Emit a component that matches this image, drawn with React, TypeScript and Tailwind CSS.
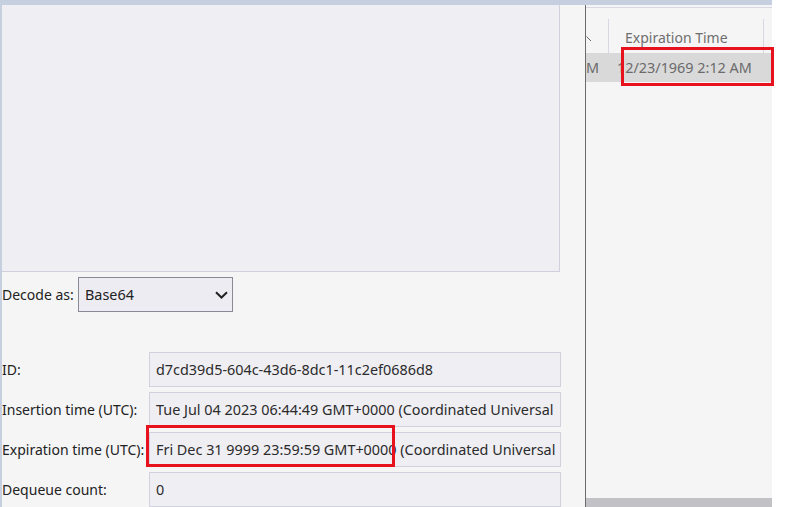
export default function App() {
  const rows: { label: string; value: string; red?: boolean }[] = [
    { label: "ID:", value: "d7cd39d5-604c-43d6-8dc1-11c2ef0686d8" },
    { label: "Insertion time (UTC):", value: "Tue Jul 04 2023 06:44:49 GMT+0000 (Coordinated Universal" },
    { label: "Expiration time (UTC):", value: "Fri Dec 31 9999 23:59:59 GMT+0000 (Coordinated Universal", red: true },
    { label: "Dequeue count:", value: "0" },
  ];
  return (
    <div className="h-[507px] w-[785px] overflow-hidden bg-white font-['Noto_Sans',sans-serif] text-[14px] text-[#222]">
      <div className="flex h-full w-[772px] flex-col bg-[#c5cfe0]">
        <div className="h-[5px] shrink-0" />
        <div className="flex min-h-0 flex-1">
          {/* left panel */}
          <div className="ml-[2px] flex w-[583px] flex-col bg-[#f5f5f5]">
            <div className="h-[267px] w-[558px] shrink-0 border-b border-r border-[#d0d0dc] bg-[#efeef3]" />
            <div className="mt-[5px] flex h-[35px] shrink-0 items-center">
              <span className="w-[76px] shrink-0 whitespace-nowrap">Decode as:</span>
              <div className="flex h-[35px] w-[155px] shrink-0 items-center justify-between border border-[#8a8a96] bg-[#edecf2] pl-[6px] pr-[4px] text-[14.4px]">
                <span>Base64</span>
                <svg width="13" height="8" viewBox="0 0 13 8" fill="none">
                  <path d="M1 1.2 L6.5 6.5 L12 1.2" stroke="#222" strokeWidth="2" />
                </svg>
              </div>
            </div>
            <div className="mt-[40px] flex flex-col gap-[5px]">
              {rows.map((r) => (
                <div key={r.label} className="flex h-[35px] shrink-0 items-center">
                  <span className="w-[147px] shrink-0 whitespace-nowrap">{r.label}</span>
                  <div className="relative h-[35px] w-[412px] shrink-0 border border-[#d2d2de] bg-[#efeef3]">
                    <div className="h-full whitespace-nowrap pl-[6px] pt-[6px] text-[14.4px] text-[#2b2b2b]">{r.value}</div>
                    {r.red && (
                      <div className="absolute left-[-4px] top-[-8px] h-[42px] w-[249px] border-[3px] border-[#e8121e]" />
                    )}
                  </div>
                </div>
              ))}
            </div>
          </div>
          <div className="w-px shrink-0 bg-[#6b6b6b]" />
          {/* right panel */}
          <div className="relative flex w-[186px] shrink-0 flex-col bg-[#f5f5f5]">
            <div className="h-[2px] shrink-0" />
            <div className="h-px shrink-0 bg-[#d8d8e4]" />
            <div className="flex h-[45px] shrink-0">
              <div className="relative w-[22px] shrink-0">
                <svg className="absolute left-0 top-[28px]" width="6" height="6" viewBox="0 0 6 6" fill="none">
                  <path d="M0.5 0.5 L5 5" stroke="#6a6a6a" strokeWidth="1" />
                </svg>
              </div>
              <div className="mt-[11px] w-px shrink-0 bg-[#d8d8e4]" />
              <div className="flex w-[154px] shrink-0 items-center pl-[16px] pt-[14px] text-[14px] text-[#6f6f6f] whitespace-nowrap">
                Expiration Time
              </div>
              <div className="mt-[11px] w-px shrink-0 bg-[#d8d8e4]" />
            </div>
            <div className="flex h-[29px] shrink-0 items-center overflow-hidden whitespace-nowrap bg-[#d9d9d9] text-[14.4px] text-[#6b6b6b]">
              <span className="w-[31px] shrink-0">M</span>
              <span>12/23/1969 2:12 AM</span>
            </div>
            <div className="absolute left-[35px] top-[42px] h-[39px] w-[153px] border-[3px] border-[#e8121e]" />
            <div className="mt-auto h-[9px] shrink-0 bg-[#c2c2c6]" />
          </div>
        </div>
      </div>
    </div>
  );
}
